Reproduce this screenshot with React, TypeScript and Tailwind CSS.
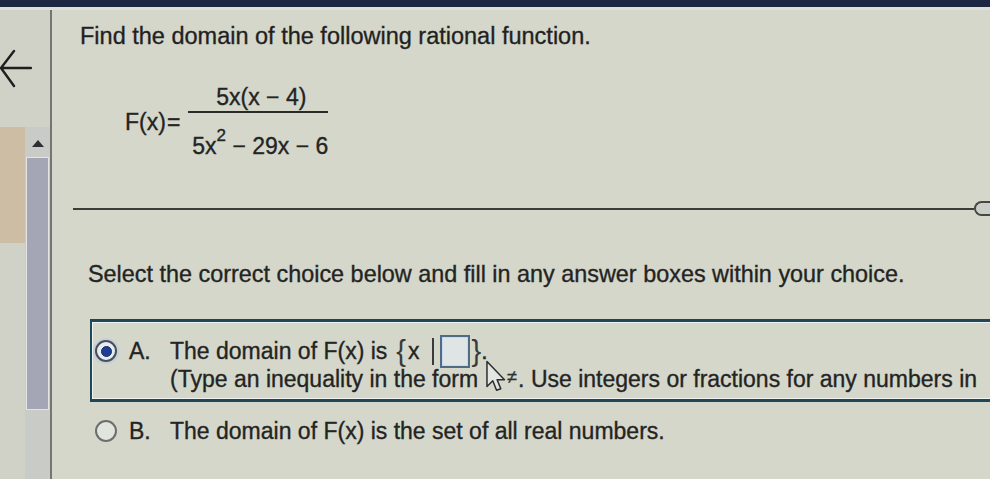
import React from "react";

function Radio({ selected }: { selected?: boolean }) {
  if (selected) {
    return (
      <div className="w-[22px] h-[22px] rounded-full border-2 border-[#4a4f57] bg-[#e6ecf2] flex items-center justify-center shadow-[0_0_0_2px_#c3cfdc] shrink-0">
        <div className="w-[11px] h-[11px] rounded-full bg-[#1f3d93] border border-[#142a6a]" />
      </div>
    );
  }
  return <div className="w-[22px] h-[22px] rounded-full border-2 border-[#6b6e6e] bg-[#e2e4de] shrink-0" />;
}

function Cursor() {
  return (
    <svg width="24" height="34" viewBox="0 0 20 32" className="block">
      <path
        d="M1.5 1.5 L1.5 25 L7 19.5 L10.5 28.5 L14.5 27 L11 18.5 L18 18.5 Z"
        fill="#e4e6e2"
        stroke="#2a2c30"
        strokeWidth="1.4"
        strokeLinejoin="round"
      />
    </svg>
  );
}

export default function App() {
  return (
    <div className="w-[990px] h-[479px] overflow-hidden bg-[#d4d7c9] flex flex-col font-['Liberation_Sans',Arial,sans-serif] text-[#232323] [-webkit-text-stroke:0.35px_#2a2a2a]">
      <div className="h-[7px] bg-[#1d2741] shrink-0" />
      <div className="h-[3px] bg-[#dde0d9] shrink-0" />
      <div className="flex flex-1 min-h-0">
        <aside className="w-[52px] shrink-0 flex flex-col border-r-2 border-[#74776f] bg-[#d0d2c7]">
          <div className="h-[117px] shrink-0 pt-[39px]">
            <svg width="32" height="40" viewBox="0 0 32 40" className="block">
              <path d="M1 19 L31 19 M1 19 L14 2 M1 19 L14 37" stroke="#1f1f1f" strokeWidth="2.4" fill="none" strokeLinecap="round" />
            </svg>
          </div>
          <div className="flex flex-1">
            <div className="w-[25px] flex flex-col">
              <div className="h-[116px] bg-[#cdbda5]" />
            </div>
            <div className="flex-1 bg-[#c9cbc6] flex flex-col items-center pt-[13px]">
              <div className="w-0 h-0 border-l-[6px] border-r-[6px] border-b-[7px] border-l-transparent border-r-transparent border-b-[#2c2f36]" />
              <div className="mt-[10px] w-[23px] h-[253px] bg-[#a4a5b5] border border-[#e3e4e6]" />
            </div>
          </div>
        </aside>

        <main className="flex-1 min-w-0 pl-[28px] pt-[13px] flex flex-col">
          <div className="text-[23.5px] leading-[26px] whitespace-nowrap text-[#1f1f1f]">
            Find the domain of the following rational function.
          </div>

          <div className="mt-[35px] ml-[45px] flex items-center text-[23px] leading-[26px]">
            <span className="whitespace-nowrap">F(x)</span>
            <span className="ml-[1px]">=</span>
            <div className="ml-[8px] w-[140px] flex flex-col items-center">
              <div className="whitespace-nowrap pl-[6px]">5x(x − 4)</div>
              <div className="h-[2px] w-full bg-[#2a2a2a] my-[1px]" />
              <div className="whitespace-nowrap mt-[13px] leading-[26px] pl-[4px]">
                5x<span className="text-[17px] leading-none align-[13px]">2</span> − 29x − 6
              </div>
            </div>
          </div>

          <div className="mt-[42px] -ml-[7px] flex items-center">
            <div className="flex-1 h-[2px] bg-[#3b3d3b]" />
            <div className="w-[16px] h-[15px] rounded-l-full border-2 border-r-0 border-[#454745] bg-[#cacdc8]" />
          </div>

          <div className="mt-[45px] ml-[8px] text-[23.4px] leading-[26px] whitespace-nowrap">
            Select the correct choice below and fill in any answer boxes within your choice.
          </div>

          <div className="mt-[32px] ml-[10px] -mr-[20px] border-t-[3px] border-b-[3px] border-l-2 border-[#214757] shadow-[inset_0_1px_0_#eef3f2,inset_1px_0_0_#eef3f2,inset_0_-1px_0_#eef3f2] pt-[15px] pb-[6px] pl-[3px]">
            <div className="flex items-center h-[28px] text-[23px] leading-[28px] whitespace-nowrap">
              <Radio selected />
              <span className="ml-[12px] w-[41px]">A.</span>
              <span>The domain of F(x) is</span>
              <span className="ml-[9px] text-[29px] leading-none font-light text-[#3a3a3a] [-webkit-text-stroke:0px]">{"{"}</span>
              <span className="ml-[2px]">x</span>
              <div className="ml-[13px] w-[2px] h-[27px] bg-[#3a3a3a]" />
              <div className="ml-[6px] w-[30px] h-[33px] shrink-0 border-2 border-[#4f6c86] bg-[#dfe4e4] shadow-[inset_0_0_0_1px_#c9d9ea]" />
              <span className="ml-[1px] text-[29px] leading-none font-light text-[#3a3a3a] [-webkit-text-stroke:0px]">{"}"}</span>
              <span>.</span>
            </div>
            <div className="flex items-center h-[28px] text-[23px] leading-[28px] whitespace-nowrap">
              <span className="w-[75px] shrink-0" />
              <span>(Type an inequality in the form</span>
              <span className="relative ml-[6px] w-[34px] h-[28px] shrink-0">
                <span className="absolute right-[1px] top-[-2px] text-[18px] text-[#333]">≠</span>
                <span className="absolute left-0 top-[-5px] [-webkit-text-stroke:0px]">
                  <Cursor />
                </span>
              </span>
              <span>. Use integers or fractions for any numbers in</span>
            </div>
          </div>

          <div className="mt-[15px] ml-[15px] flex items-center h-[28px] text-[23px] leading-[28px] whitespace-nowrap">
            <Radio />
            <span className="ml-[12px] w-[41px]">B.</span>
            <span>The domain of F(x) is the set of all real numbers.</span>
          </div>
        </main>
      </div>
    </div>
  );
}
